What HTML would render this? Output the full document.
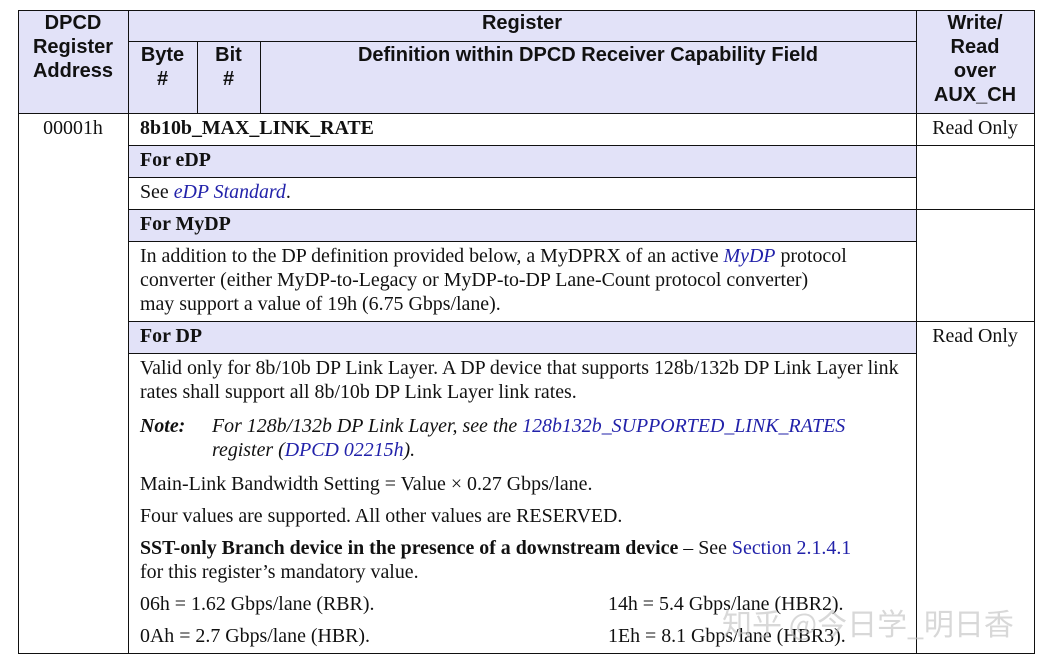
<!DOCTYPE html>
<html><head><meta charset="utf-8"><style>
body{margin:0;width:1049px;height:664px;background:#fff;position:relative;overflow:hidden;font-family:"Liberation Serif",serif;font-size:19.9px;color:#111}
.a{position:absolute;white-space:nowrap;line-height:24px;margin-top:1px}
.f{position:absolute;background:#e2e2f8}
.h{position:absolute;background:#111}
.v{position:absolute;background:#111;width:1px}
.s{font-family:"Liberation Sans",sans-serif;font-weight:bold;font-size:20px;text-align:center;line-height:24px}
.l{color:#2222aa;font-style:italic}
.lb{color:#2222aa}
b{font-weight:bold}
.wm{position:absolute;color:rgba(190,190,190,0.6);font-family:"Noto Sans CJK SC",sans-serif;font-size:30px;white-space:nowrap}
</style></head><body>
<div class="f" style="left:18px;top:10px;width:1016px;height:103px"></div>
<div class="f" style="left:129px;top:146px;width:787px;height:31px"></div>
<div class="f" style="left:129px;top:210px;width:787px;height:31px"></div>
<div class="f" style="left:129px;top:322px;width:787px;height:31px"></div>

<div class="h" style="left:18px;top:10px;width:1017px;height:1px"></div>
<div class="h" style="left:128px;top:41px;width:789px;height:1px"></div>
<div class="h" style="left:18px;top:113px;width:1017px;height:1px"></div>
<div class="h" style="left:128px;top:145px;width:907px;height:1px"></div>
<div class="h" style="left:128px;top:177px;width:789px;height:1px"></div>
<div class="h" style="left:128px;top:209px;width:907px;height:1px"></div>
<div class="h" style="left:128px;top:241px;width:789px;height:1px"></div>
<div class="h" style="left:128px;top:321px;width:907px;height:1px"></div>
<div class="h" style="left:128px;top:353px;width:789px;height:1px"></div>
<div class="h" style="left:18px;top:653px;width:1017px;height:1px"></div>
<div class="v" style="left:18px;top:10px;height:644px"></div>
<div class="v" style="left:128px;top:10px;height:644px"></div>
<div class="v" style="left:197px;top:41px;height:72px"></div>
<div class="v" style="left:260px;top:41px;height:72px"></div>
<div class="v" style="left:916px;top:10px;height:644px"></div>
<div class="v" style="left:1034px;top:10px;height:644px"></div>

<div class="a s" style="left:18px;top:10px;width:110px">DPCD<br>Register<br>Address</div>
<div class="a s" style="left:128px;top:10px;width:788px">Register</div>
<div class="a s" style="left:128px;top:42px;width:69px">Byte<br>#</div>
<div class="a s" style="left:197px;top:42px;width:63px">Bit<br>#</div>
<div class="a s" style="left:260px;top:42px;width:656px">Definition within DPCD Receiver Capability Field</div>
<div class="a s" style="left:916px;top:10px;width:118px">Write/<br>Read<br>over<br>AUX_CH</div>

<div class="a" style="left:18px;top:115px;width:110px;text-align:center">00001h</div>
<div class="a" style="left:140px;top:115px"><b>8b10b_MAX_LINK_RATE</b></div>
<div class="a" style="left:916px;top:115px;width:118px;text-align:center">Read Only</div>
<div class="a" style="left:140px;top:147px"><b>For eDP</b></div>
<div class="a" style="left:140px;top:179px">See <span class="l">eDP Standard</span>.</div>
<div class="a" style="left:140px;top:211px"><b>For MyDP</b></div>
<div class="a" style="left:140px;top:243px">In addition to the DP definition provided below, a MyDPRX of an active <span class="l">MyDP</span> protocol<br>converter (either MyDP-to-Legacy or MyDP-to-DP Lane-Count protocol converter)<br>may support a value of 19h (6.75 Gbps/lane).</div>
<div class="a" style="left:140px;top:323px"><b>For DP</b></div>
<div class="a" style="left:916px;top:323px;width:118px;text-align:center">Read Only</div>
<div class="a" style="left:140px;top:355px">Valid only for 8b/10b DP Link Layer. A DP device that supports 128b/132b DP Link Layer link<br>rates shall support all 8b/10b DP Link Layer link rates.</div>
<div class="a" style="left:140px;top:413px"><b><i>Note:</i></b></div>
<div class="a" style="left:212px;top:413px"><i>For 128b/132b DP Link Layer, see the <span class="lb">128b132b_SUPPORTED_LINK_RATES</span><br>register (<span class="lb">DPCD 02215h</span>).</i></div>
<div class="a" style="left:140px;top:471px">Main-Link Bandwidth Setting = Value × 0.27 Gbps/lane.</div>
<div class="a" style="left:140px;top:503px">Four values are supported. All other values are RESERVED.</div>
<div class="a" style="left:140px;top:535px"><b>SST-only Branch device in the presence of a downstream device</b> – See <span class="lb">Section 2.1.4.1</span><br>for this register’s mandatory value.</div>
<div class="a" style="left:140px;top:591px">06h = 1.62 Gbps/lane (RBR).</div>
<div class="a" style="left:608px;top:591px">14h = 5.4 Gbps/lane (HBR2).</div>
<div class="a" style="left:140px;top:623px">0Ah = 2.7 Gbps/lane (HBR).</div>
<div class="a" style="left:608px;top:623px">1Eh = 8.1 Gbps/lane (HBR3).</div>
<div class="wm" style="left:722px;top:600px">知乎 @今日学_明日香</div>
</body></html>
